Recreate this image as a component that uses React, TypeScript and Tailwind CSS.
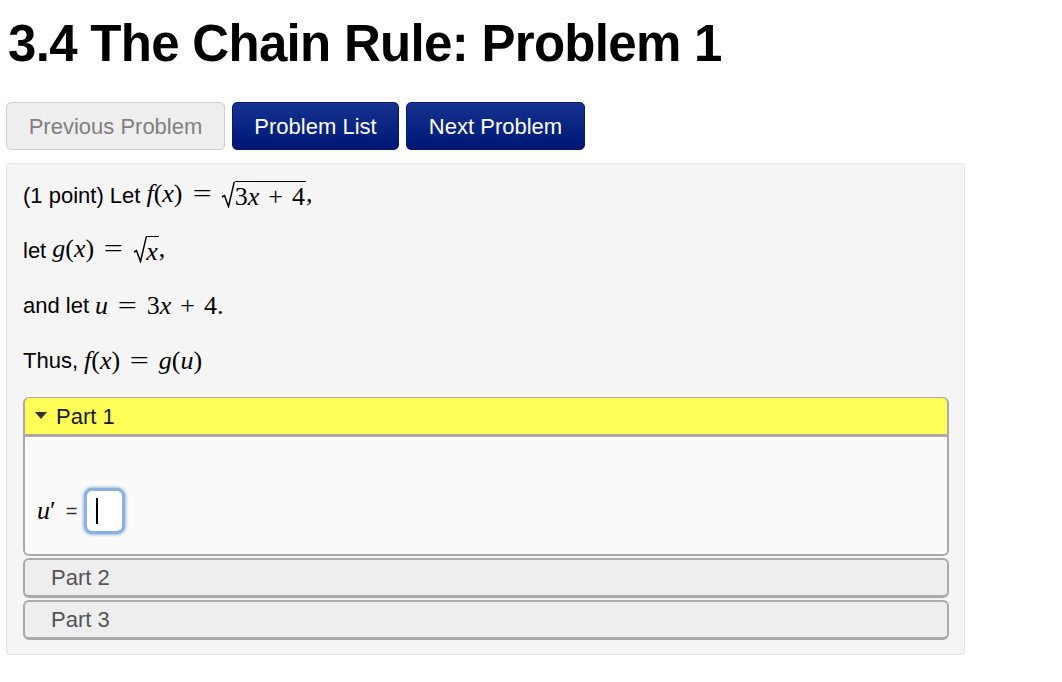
import React from "react";

const V = ({ children }: { children: React.ReactNode }) => (
  <span className="italic">{children}</span>
);

const Math = ({ children }: { children: React.ReactNode }) => (
  <span className="inline-flex items-baseline font-['Liberation_Serif','Times_New_Roman',serif] text-[26px] leading-none">
    {children}
  </span>
);

const Eq = () => (
  <span className="px-[12px]">
    <span className="inline-block scale-x-[1.3]">=</span>
  </span>
);
const Plus = () => <span className="px-[9px]">+</span>;

const Sqrt = ({ children }: { children: React.ReactNode }) => (
  <span className="inline-flex items-stretch self-end">
    <svg width="14" height="27" viewBox="0 0 14 27" className="-mr-[0.5px] shrink-0">
      <path d="M1 16 L3.5 14.5 L7.5 25.5 L13.3 0.8" fill="none" stroke="#000" strokeWidth="1.5" />
    </svg>
    <span className="border-t-[1.5px] border-black pt-[2px] pr-[1px] leading-none">{children}</span>
  </span>
);

export default function App() {
  return (
    <div className="min-h-[682px] w-[1062px] bg-white font-['Liberation_Sans',Arial,sans-serif] text-black">
      <h1 className="ml-[8px] mt-[18px] text-[51px] font-bold leading-none tracking-[-0.7px]">
        3.4 The Chain Rule: Problem 1
      </h1>

      <div className="ml-[6px] mt-[33px] flex gap-[7px]">
        <button className="flex h-[48px] w-[219px] items-center justify-center rounded-[5px] border border-[#cfcfcf] bg-[#eeeeee] text-[22px] text-[#808080]">
          Previous Problem
        </button>
        <button className="flex h-[48px] w-[167px] items-center justify-center rounded-[5px] border border-[#0a1a6a] bg-gradient-to-b from-[#17338f] to-[#001575] text-[22px] text-white">
          Problem List
        </button>
        <button className="flex h-[48px] w-[179px] items-center justify-center rounded-[5px] border border-[#0a1a6a] bg-gradient-to-b from-[#17338f] to-[#001575] text-[22px] text-white">
          Next Problem
        </button>
      </div>

      <div className="ml-[6px] mt-[13px] h-[492px] w-[959px] rounded-[4px] border border-[#e3e3e3] bg-[#f5f5f5] pl-[16px] pr-[15px] pt-[4px] text-[22px]">
        <div className="flex h-[55px] items-center gap-[6px]">
          <span>(1 point) Let</span>
          <Math>
            <V>f</V>(<V>x</V>)<Eq />
            <Sqrt>
              3<V>x</V>
              <Plus />4
            </Sqrt>
            ,
          </Math>
        </div>
        <div className="flex h-[55px] items-center gap-[6px]">
          <span>let</span>
          <Math>
            <V>g</V>(<V>x</V>)<Eq />
            <Sqrt>
              <V>x</V>
            </Sqrt>
            ,
          </Math>
        </div>
        <div className="flex h-[55px] items-center gap-[6px]">
          <span>and let</span>
          <Math>
            <V>u</V>
            <Eq />3<V>x</V>
            <Plus />
            4.
          </Math>
        </div>
        <div className="flex h-[55px] items-center gap-[6px]">
          <span>Thus,</span>
          <Math>
            <V>f</V>(<V>x</V>)<Eq />
            <V>g</V>(<V>u</V>)
          </Math>
        </div>

        <div className="mt-[9px]">
          <div className="flex h-[40px] items-center rounded-t-[6px] border-x-2 border-t border-b-[3px] border-[#aaaaaa] bg-[#ffff58] pl-[10px] text-[#1a1a1a]">
            <svg width="12" height="8" viewBox="0 0 12 8" className="mr-[9px]">
              <polygon points="0,0 12,0 6,7" fill="#333" />
            </svg>
            Part 1
          </div>
          <div className="flex h-[119px] items-end rounded-b-[6px] border-x-2 border-b-2 border-[#aaaaaa] bg-[#fafafa] pb-[20px] pl-[12px]">
            <div className="flex items-center">
              <span className="font-['Liberation_Serif',serif] text-[26px] italic leading-none">
                u<span className="not-italic">′</span>
              </span>
              <span className="ml-[10px] text-[20px] text-[#333]">=</span>
              <div className="ml-[7px] flex h-[46px] w-[41px] items-center rounded-[8px] border-[3px] border-[#8db1dd] bg-white pl-[9px] shadow-[0_0_3px_1px_rgba(90,140,210,0.6)]">
                <div className="h-[26px] w-[2px] bg-black" />
              </div>
            </div>
          </div>
          <div className="mt-[2px] flex h-[40px] items-center rounded-[6px] border-2 border-b-[3px] border-[#aaaaaa] bg-[#eeeeee] pl-[26px] text-[#555]">
            Part 2
          </div>
          <div className="mt-[2px] flex h-[40px] items-center rounded-[6px] border-2 border-b-[3px] border-[#aaaaaa] bg-[#eeeeee] pl-[26px] text-[#555]">
            Part 3
          </div>
        </div>
      </div>
    </div>
  );
}
